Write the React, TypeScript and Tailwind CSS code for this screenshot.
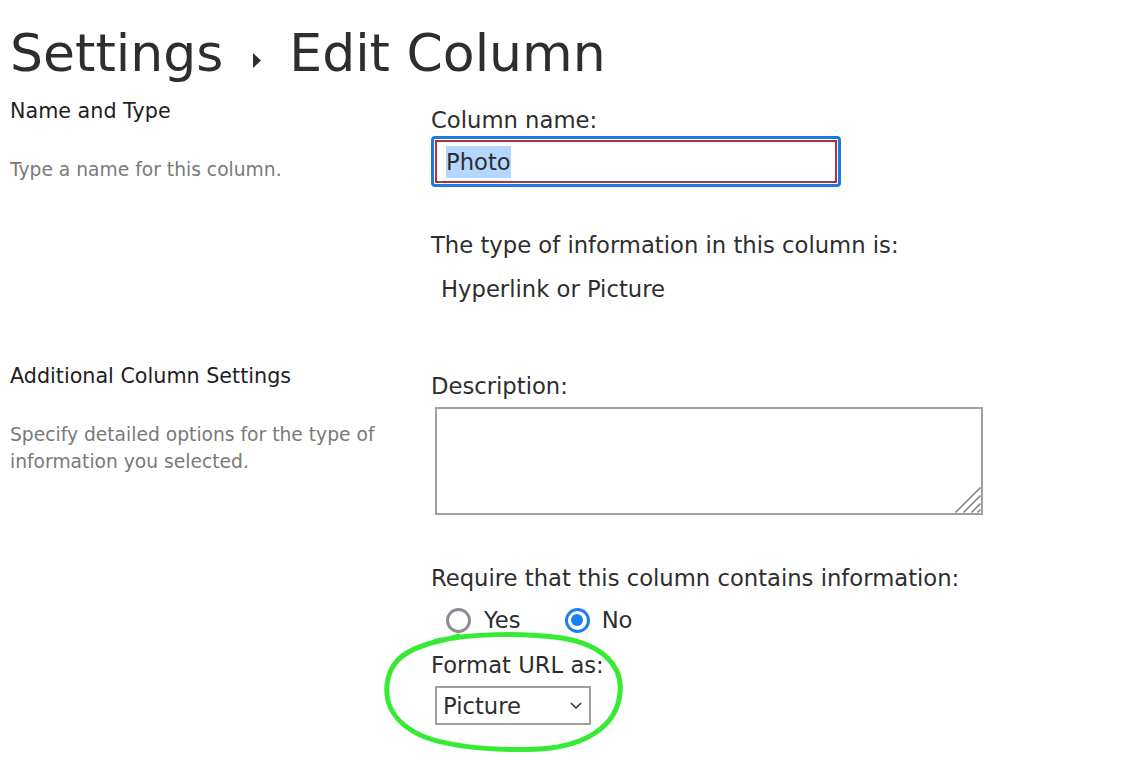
import React from "react";

function Radio({ checked }: { checked: boolean }) {
  if (checked) {
    return (
      <span className="w-[25px] h-[25px] rounded-full border-[3px] border-[#1a7ff0] flex items-center justify-center shrink-0">
        <span className="block w-[12px] h-[12px] rounded-full bg-[#1a7ff0]" />
      </span>
    );
  }
  return <span className="block w-[25px] h-[25px] rounded-full border-[3px] border-[#8c8c96] shrink-0" />;
}

export default function App() {
  return (
    <div
      className="relative w-[1126px] h-[760px] overflow-hidden bg-white px-[10px] text-[#2e2e2e]"
      style={{ fontFamily: "'DejaVu Sans', Verdana, sans-serif" }}
    >
      <h1 className="pt-[23px] text-[52px] leading-[60px] text-[#2e2e2e] whitespace-nowrap">
        <span>Settings</span>
        <svg
          className="inline-block ml-[30px] mr-[28px] align-[3px]"
          width="8"
          height="15"
          viewBox="0 0 8 15"
        >
          <path d="M0 0 L8 7.5 L0 15 Z" fill="#2e2e2e" />
        </svg>
        <span>Edit Column</span>
      </h1>

      {/* Section 1 */}
      <div className="grid grid-cols-[421px_1fr] mt-[15px]">
        <div>
          <div className="text-[20.7px] leading-[27px] text-[#1e1e1e]">Name and Type</div>
          <div className="mt-[31px] text-[18.7px] leading-[27px] text-[#7a7a7a]">
            Type a name for this column.
          </div>
        </div>
        <div className="pt-[8px]">
          <div className="text-[22.7px] leading-[28px]">Column name:</div>
          <div className="mt-[2px] w-[410px] h-[51px] border-[3px] border-[#1b7ae6] rounded-[4px] p-px bg-white">
            <div className="h-full border-2 border-[#a8323e] flex items-center pl-[9px]">
              <span className="bg-[#b4d7ff] text-[22.7px] leading-[32px] text-[#2e2e2e]">Photo</span>
            </div>
          </div>
          <div className="mt-[44px] text-[22.7px] leading-[28px]">
            The type of information in this column is:
          </div>
          <div className="mt-[16px] pl-[10px] text-[22.7px] leading-[28px]">Hyperlink or Picture</div>
        </div>
      </div>

      {/* Section 2 */}
      <div className="grid grid-cols-[421px_1fr] mt-[60px]">
        <div>
          <div className="text-[20.7px] leading-[27px] text-[#1e1e1e]">Additional Column Settings</div>
          <div className="mt-[31px] text-[18.7px] leading-[27px] text-[#7a7a7a]">
            Specify detailed options for the type of
            <br />
            information you selected.
          </div>
        </div>
        <div className="pt-[9px]">
          <div className="text-[22.7px] leading-[28px]">Description:</div>
          <div className="relative mt-[7px] ml-[4px] w-[548px] h-[108px] border-2 border-[#a0a0a0] bg-white">
            <svg className="absolute right-0 bottom-0" width="26" height="26" viewBox="0 0 26 26">
              <g stroke="#777" strokeWidth="1.4" strokeLinecap="square">
                <line x1="1" y1="25" x2="25" y2="1" />
                <line x1="9" y1="25" x2="25" y2="9" />
                <line x1="17" y1="25" x2="25" y2="17" />
                <line x1="23" y1="25" x2="25" y2="23" />
              </g>
            </svg>
          </div>
          <div className="mt-[49px] text-[22.7px] leading-[28px]">
            Require that this column contains information:
          </div>
          <div className="mt-[14px] h-[28px] flex items-center text-[22.7px] leading-[28px]">
            <span className="ml-[15px]">
              <Radio checked={false} />
            </span>
            <span className="ml-[13px]">Yes</span>
            <span className="ml-[44px]">
              <Radio checked={true} />
            </span>
            <span className="ml-[12px]">No</span>
          </div>
          <div className="mt-[17px] text-[22.7px] leading-[28px]">Format URL as:</div>
          <div className="mt-[7px] ml-[4px] w-[156px] h-[39px] border-2 border-[#a0a0a0] flex items-center justify-between pl-[6px] pr-[7px] bg-white">
            <span className="text-[22.7px] leading-[28px]">Picture</span>
            <svg width="12" height="7" viewBox="0 0 12 7">
              <path d="M1 1 L6 6 L11 1" fill="none" stroke="#333" strokeWidth="1.5" />
            </svg>
          </div>
        </div>
      </div>

      {/* Hand-drawn green annotation */}
      <svg className="absolute inset-0 pointer-events-none" width="1126" height="760" viewBox="0 0 1126 760">
        <path
          d="M436 641 C470 634 520 632 562 638 C604 645 623 667 620 693 C617 726 586 746 540 749 C500 751 450 748 420 735 C395 723 385 705 387 685 C389 665 400 653 425 645 C440 640 450 639 458 636"
          fill="none"
          stroke="#37eb34"
          strokeWidth="5"
          strokeLinecap="round"
          strokeLinejoin="round"
        />
      </svg>
    </div>
  );
}
